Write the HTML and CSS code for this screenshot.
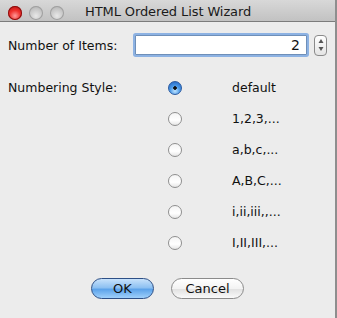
FILE: index.html
```html
<!DOCTYPE html>
<html>
<head>
<meta charset="utf-8">
<link rel="stylesheet" href="styles.css">
</head>
<body>
<div class="window">
  <div class="titlebar">
    <div class="lights">
      <span class="light red"></span>
      <span class="light gray"></span>
      <span class="light gray"></span>
    </div>
    <div class="title">HTML Ordered List Wizard</div>
  </div>
  <div class="content">
    <div class="items-row">
      <span class="label">Number of Items:</span>
      <div class="field"><span>2</span></div>
      <div class="stepper">
        <svg width="8" height="16" viewBox="0 0 8 16"><path d="M4 2 L6.5 6 L1.5 6 Z" fill="#555"/><path d="M4 14 L6.5 10 L1.5 10 Z" fill="#555"/></svg>
      </div>
    </div>
    <div class="styles">
      <span class="label style-label">Numbering Style:</span>
      <span class="radio checked"></span><span class="opt">default</span>
      <span class="radio"></span><span class="opt">1,2,3,...</span>
      <span class="radio"></span><span class="opt">a,b,c,...</span>
      <span class="radio"></span><span class="opt">A,B,C,...</span>
      <span class="radio"></span><span class="opt">i,ii,iii,,...</span>
      <span class="radio"></span><span class="opt">I,II,III,...</span>
    </div>
    <div class="buttons">
      <button class="btn ok">OK</button>
      <button class="btn cancel">Cancel</button>
    </div>
  </div>
</div>
</body>
</html>
```
FILE: styles.css
```css
html, body {
  margin: 0;
  padding: 0;
  background: #ececec;
}
body {
  font-family: "DejaVu Sans", "Liberation Sans", sans-serif;
  font-size: 12px;
  color: #111;
  width: 337px;
  height: 318px;
  overflow: hidden;
}
.window {
  width: 335px;
  height: 318px;
  border-right: 2px solid #8e8e8e;
  background: #ececec;
}
.titlebar {
  height: 21px;
  border-bottom: 1px solid #7c7c7c;
  background: linear-gradient(#d8d8d8, #c2c2c2);
  display: flex;
  align-items: center;
  position: relative;
}
.lights {
  display: flex;
  gap: 7px;
  padding-left: 8px;
  margin-top: 4px;
}
.light {
  width: 14px;
  height: 14px;
  border-radius: 50%;
  display: block;
}
.light.red {
  background: radial-gradient(circle at 50% 70%, #ff9a9a 0%, #f0302c 45%, #a80d0d 100%);
  box-shadow: inset 0 0 0 1px #8a1010;
}
.light.gray {
  background: radial-gradient(circle at 50% 70%, #e8e8e8 0%, #c6c6c6 55%, #a8a8a8 100%);
  box-shadow: inset 0 0 0 1px #a0a0a0;
}
.title {
  position: absolute;
  left: 85px;
  top: 4px;
  font-size: 13px;
  color: #1a1a1a;
  letter-spacing: -0.1px;
}
.content {
  padding: 10px 0 0 8px;
}
.items-row {
  display: flex;
  align-items: center;
  height: 26px;
}
.label {
  font-size: 12.5px;
}
.items-row .label {
  width: 124px;
}
.field {
  width: 172px;
  height: 20px;
  background: #fff;
  border: 1px solid #6f8fb8;
  box-shadow: 0 0 0 2px #8db2e3;
  border-radius: 1px;
  margin-left: 3px;
  display: flex;
  align-items: center;
  justify-content: flex-end;
  font-size: 14px;
  padding-right: 6px;
  box-sizing: border-box;
}
.stepper {
  width: 11px;
  height: 19px;
  margin-left: 7px;
  border: 1px solid #8a8a8a;
  border-radius: 4px;
  background: linear-gradient(#ffffff, #e4e4e4);
  display: flex;
  align-items: center;
  justify-content: center;
}
.styles {
  display: grid;
  grid-template-columns: 160px 14px 1fr;
  grid-auto-rows: 31px;
  column-gap: 0;
  align-items: center;
  margin-top: 14px;
}
.style-label {
  grid-column: 1;
  grid-row: 1;
}
.radio {
  grid-column: 2;
  width: 14px;
  height: 14px;
  border-radius: 50%;
  box-sizing: border-box;
  border: 1px solid #8f8f8f;
  background: linear-gradient(#f4f4f4, #ffffff 60%, #e6e6e6);
  display: block;
}
.radio.checked {
  border-color: #2a5aa0;
  background: radial-gradient(circle at 50% 50%, #111 0, #111 1.5px, transparent 2px),
              radial-gradient(circle at 50% 75%, #bfe4ff 0%, #4c9ae8 45%, #1d5fbf 100%);
}
.opt {
  grid-column: 3;
  font-size: 12.5px;
  padding-left: 50px;
}
.buttons {
  display: flex;
  justify-content: center;
  gap: 17px;
  margin-top: 20px;
  padding-right: 8px;
}
.btn {
  font-family: inherit;
  font-size: 13px;
  height: 21px;
  border-radius: 11px;
  padding: 0;
  color: #111;
}
.ok {
  width: 63px;
  border: 1px solid #2d4f86;
  background: linear-gradient(#c8e2fb 0%, #8ec1f2 45%, #5da3ea 55%, #9fd0fb 100%);
}
.cancel {
  width: 73px;
  border: 1px solid #8b8b8b;
  background: linear-gradient(#ffffff 0%, #f3f3f3 50%, #e2e2e2 55%, #fafafa 100%);
}
```
